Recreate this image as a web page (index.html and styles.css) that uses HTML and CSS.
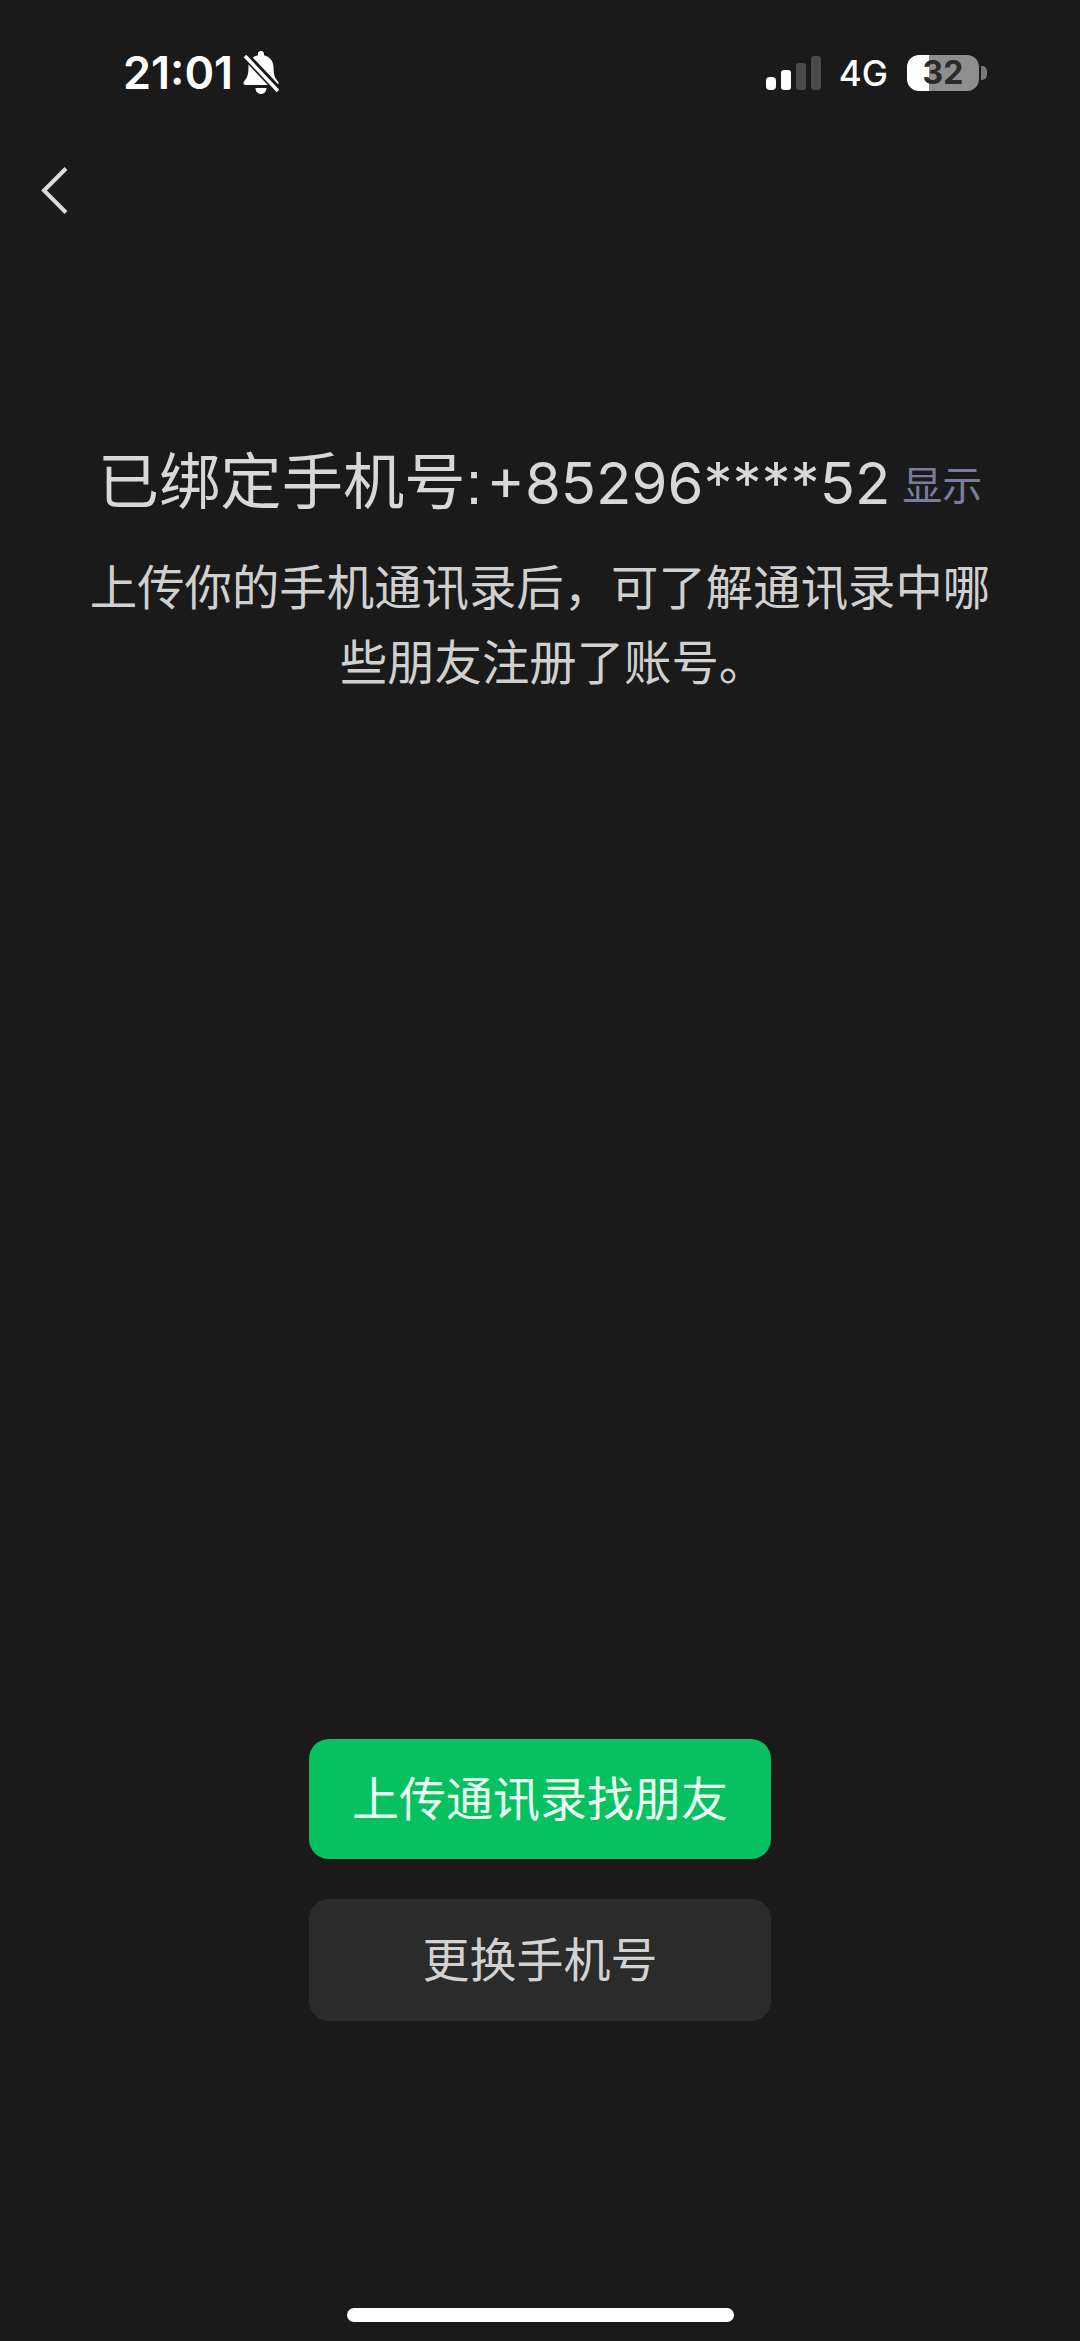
FILE: index.html
```html
<!DOCTYPE html>
<html lang="zh-CN">
<head>
<meta charset="utf-8">
<title>已绑定手机号</title>
<link rel="stylesheet" href="styles.css">
</head>
<body>
<div class="page">
  <div class="status">
    <div class="status-left">
      <span class="time">21:01</span>
      <svg class="bell" viewBox="0 0 36 46" aria-hidden="true">
        <path class="bell-body" d="M18 1c1.800 0 3 1.200 3 2.800v1.400c6.200 1.400 9.600 6.400 9.600 13 0 6.800 1.400 10 4.400 13.300.9 1 1 3.500-1.600 3.500H2.600C0 35 .1 32.500 1 31.500c3-3.300 4.400-6.500 4.400-13.300 0-6.600 3.400-11.600 9.600-13V3.800C15 2.200 16.200 1 18 1z"/>
        <path class="bell-body" d="M12.500 38h11c0 3.400-2.400 6-5.500 6s-5.500-2.600-5.500-6z"/>
        <path class="bell-gap" d="M0 3l36 38"/>
        <path class="bell-slash" d="M2 6l33 35"/>
      </svg>
    </div>
    <div class="status-right">
      <div class="signal">
        <span class="bar bar-1"></span>
        <span class="bar bar-2"></span>
        <span class="bar bar-3"></span>
        <span class="bar bar-4"></span>
      </div>
      <span class="net">4G</span>
      <div class="battery">
        <div class="battery-body"><span class="battery-level">32</span></div>
        <span class="battery-nub"></span>
      </div>
    </div>
  </div>

  <div class="nav">
    <svg class="back" viewBox="0 0 28 48" aria-hidden="true">
      <path d="M25 2.500 3 24.500 25 46.500"/>
    </svg>
  </div>

  <div class="intro">
    <div class="title-row">
      <span class="title">已绑定手机号: <span class="title-num">+85296****52</span></span>
      <span class="show">显示</span>
    </div>
    <p class="desc">
      <span class="desc-line">上传你的手机通讯录后，可了解通讯录中哪</span>
      <span class="desc-line desc-last">些朋友注册了账号。</span>
    </p>
  </div>

  <div class="actions">
    <div class="btn btn-primary">上传通讯录找朋友</div>
    <div class="btn btn-secondary">更换手机号</div>
  </div>

  <div class="home-wrap"><span class="home"></span></div>
</div>
</body>
</html>
```

FILE: styles.css
```css
* { box-sizing: border-box; }
html, body { margin: 0; padding: 0; background: #1a1a1a; }
body { font-family: "Liberation Sans", "Noto Sans CJK SC", sans-serif; }

.page {
  width: 1080px;
  height: 2341px;
  display: flex;
  flex-direction: column;
  overflow: hidden;
  background: #1a1a1a;
}

.status {
  height: 52px;
  margin-top: 47px;
  padding: 0 93px 0 123px;
  display: flex;
  align-items: center;
  justify-content: space-between;
  color: #fff;
}
.status-left { display: flex; align-items: center; gap: 10px; }
.time { font-family: Inter, "Liberation Sans", sans-serif; font-size: 45px; font-weight: 600; line-height: 50px; }
.bell { width: 36px; height: 46px; display: block; }
.bell-body { fill: #fff; }
.bell-gap { stroke: #1a1a1a; stroke-width: 8; fill: none; }
.bell-slash { stroke: #fff; stroke-width: 3.500; fill: none; }

.status-right { display: flex; align-items: center; }
.signal { display: flex; align-items: flex-end; gap: 5px; height: 34px; }
.bar { width: 10px; border-radius: 3px; background: #4a4a4a; }
.bar-1 { height: 13px; background: #fff; border-radius: 4px; }
.bar-2 { height: 20px; background: #fff; }
.bar-3 { height: 27px; }
.bar-4 { height: 34px; }
.net { margin-left: 18px; font-family: Inter, "Liberation Sans", sans-serif; font-size: 35px; font-weight: 500; line-height: 40px; }
.battery { margin-left: 19px; display: flex; align-items: center; gap: 2px; }
.battery-body {
  width: 72px;
  height: 36px;
  border-radius: 12px;
  background: linear-gradient(90deg, #fff 0 22px, #8e8e8e 22px);
  display: flex;
  align-items: center;
  justify-content: center;
}
.battery-level { font-family: Inter, "Liberation Sans", sans-serif; font-size: 32px; font-weight: 700; line-height: 36px; color: #2a2a2a; }
.battery-nub { width: 6px; height: 14px; border-radius: 0 5px 5px 0; background: #777; }

.nav { padding: 67px 0 0 41px; }
.back { width: 28px; height: 48px; display: block; }
.back path { fill: none; stroke: #dcdcdc; stroke-width: 4; }

.intro { margin-top: 234px; display: flex; flex-direction: column; align-items: center; }
.title-row { display: flex; align-items: center; gap: 12px; line-height: 70px; }
.title { font-size: 61.300px; word-spacing: -13px; color: #d8d8d8; }
.title-num { font-family: Inter, "Liberation Sans", sans-serif; font-size: 58px; }
.show { margin-top: 5px; font-size: 40px; line-height: 50px; color: #7c7c9e; }
.desc {
  margin: 33px 0 0;
  font-size: 47.400px;
  line-height: 75px;
  color: #d0d0d0;
  text-align: center;
}
.desc-line { display: block; }
.desc-last { padding-left: 26px; }

.actions {
  margin-top: auto;
  display: flex;
  flex-direction: column;
  align-items: center;
  gap: 40px;
}
.btn {
  width: 462px;
  height: 120px;
  padding-bottom: 8px;
  border-radius: 20px;
  display: flex;
  align-items: center;
  justify-content: center;
  font-size: 47px;
}
.btn-primary { background: #07c160; color: #eafff2; }
.btn-secondary { height: 122px; background: #2b2b2b; color: #d2d2d2; }

.home-wrap { height: 320px; display: flex; align-items: flex-end; justify-content: center; padding-bottom: 19px; }
.home { width: 387px; height: 14px; border-radius: 7px; background: #fff; display: block; }
```
